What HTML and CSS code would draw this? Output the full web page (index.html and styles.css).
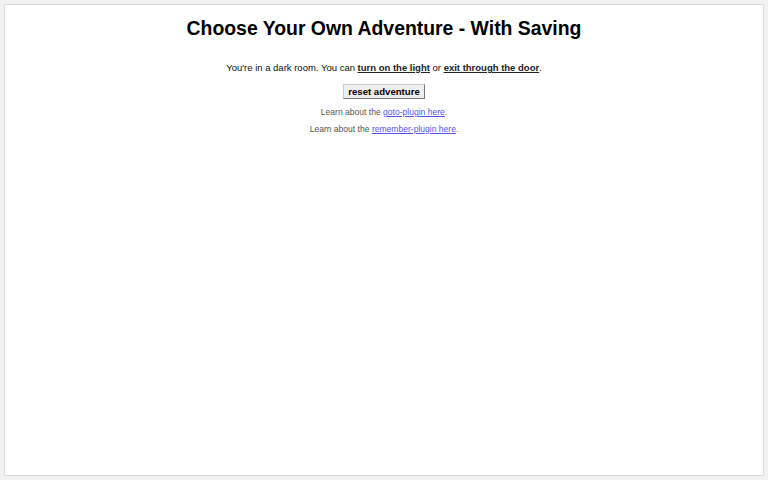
FILE: index.html
```html
<!DOCTYPE html>
<html lang="en">
<head>
    <meta charset="UTF-8">
    <title>Choose Your Own Adventure - With Saving</title>
    <link rel="stylesheet" href="styles.css">
</head>
<body>

    <div class="frame">
        <h1>Choose Your Own Adventure - With Saving</h1>
        <p class="story">You're in a dark room. You can <a href="#">turn on the light</a> or <a href="#">exit through the door</a>.</p>
        <button class="reset">reset adventure</button>
        <p class="note">Learn about the <a href="#">goto-plugin here</a>.</p>
        <p class="note">Learn about the <a href="#">remember-plugin here</a>.</p>
    </div>

</body>
</html>
```

FILE: styles.css
```css
* {
    margin: 0;
    padding: 0;
    box-sizing: border-box;
    font-family: 'Liberation Sans', Arial, sans-serif;
}

body {
    background: #f2f2f2;
    padding: 4px;
    height: 100vh;
}

.frame {
    background: #fff;
    border: 1px solid #dcdcdc;
    height: 100%;
    display: flex;
    flex-direction: column;
    align-items: center;
    text-align: center;
    padding-top: 12px;
}

h1 {
    font-size: 19.4px;
    line-height: 22px;
    font-weight: bold;
    color: #000;
    margin-bottom: 23px;
}

.story {
    font-size: 9.5px;
    line-height: 12px;
    color: #111;
    margin-bottom: 10px;
}

.story a {
    color: #222;
    font-weight: bold;
    text-decoration: underline;
}

.reset {
    font-size: 9.6px;
    font-weight: bold;
    height: 15px;
    padding: 0 4px;
    background: #efefef;
    color: #000;
    border: 1px solid #777;
    border-top-color: #ccc;
    border-left-color: #ccc;
    margin-bottom: 8px;
}

.note {
    font-size: 8.55px;
    line-height: 10px;
    color: #555;
    margin-bottom: 7px;
}

.note a {
    color: #5555ee;
}
```
